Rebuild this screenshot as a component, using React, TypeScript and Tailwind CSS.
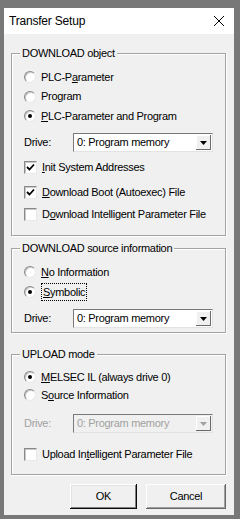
import React from "react";

const font = { fontFamily: '"Liberation Sans", Arial, sans-serif' };

function Radio({ checked }: { checked?: boolean }) {
  return (
    <span className="relative flex h-[12px] w-[12px] shrink-0 items-center justify-center rounded-full border border-t-[#8a8a8a] border-l-[#8a8a8a] border-r-[#e8e8e8] border-b-[#e8e8e8] bg-white shadow-[inset_1px_1px_0_#c8c8c8]">
      {checked && <span className="h-[4px] w-[4px] rounded-full bg-black" />}
    </span>
  );
}

function Check({ checked }: { checked?: boolean }) {
  return (
    <span className="flex h-[13px] w-[13px] shrink-0 items-center justify-center border border-t-[#8a8a8a] border-l-[#8a8a8a] border-r-[#e8e8e8] border-b-[#e8e8e8] bg-white shadow-[inset_1px_1px_0_#c8c8c8]">
      {checked && (
        <svg width="9" height="9" viewBox="0 0 9 9">
          <path d="M1 4 L3.5 6.5 L8 1.5" fill="none" stroke="#000" strokeWidth="1.8" />
        </svg>
      )}
    </span>
  );
}

function Row({
  children,
  h = "h-[20px]",
  extra = "",
}: {
  children: React.ReactNode;
  h?: string;
  extra?: string;
}) {
  return <div className={`flex items-center gap-[5px] pl-[12px] ${h} ${extra}`}>{children}</div>;
}

function Select({ disabled, extra = "" }: { disabled?: boolean; extra?: string }) {
  return (
    <div className={`flex h-[19px] items-center pl-[12px] pr-[12px] ${extra}`}>
      <span className={`w-[49px] ${disabled ? "text-[#a0a0a0]" : "text-black"}`}>Drive:</span>
      <div
        className={`flex h-full flex-1 items-center border border-t-[#7a7a7a] border-l-[#7a7a7a] border-r-[#e3e3e3] border-b-[#e3e3e3] ${
          disabled ? "bg-[#f0f0f0]" : "bg-white"
        }`}
      >
        <span className={`flex-1 pl-[3px] ${disabled ? "text-[#a0a0a0]" : "text-black"}`}>
          0: Program memory
        </span>
        <span className="mr-[1px] flex h-[15px] w-[15px] items-center justify-center bg-[#f0f0f0] shadow-[inset_-1px_-1px_0_#6a6a6a,inset_1px_1px_0_#fff]">
          <svg width="7" height="4" viewBox="0 0 7 4">
            <path d="M0 0 H7 L3.5 4 Z" fill={disabled ? "#a0a0a0" : "#000"} />
          </svg>
        </span>
      </div>
    </div>
  );
}

function Group({
  label,
  children,
  extra = "",
}: {
  label: string;
  children: React.ReactNode;
  extra?: string;
}) {
  return (
    <div
      className={`relative border border-[#a3a3a3] shadow-[1px_1px_0_#fff,inset_1px_1px_0_#fff] ${extra}`}
    >
      <span className="absolute -top-[8px] left-[8px] bg-[#f0f0f0] px-[2px] leading-[14px]">
        {label}
      </span>
      {children}
    </div>
  );
}

export default function App() {
  return (
    <div
      className="flex h-[519px] w-[240px] flex-col bg-[#787878] pb-[4px] pl-[4px] pr-[6px] pt-[8px] text-[11px] tracking-[-0.3px] text-black"
      style={font}
    >
      <div className="flex flex-1 flex-col bg-[#f0f0f0]">
        <div className="flex h-[26px] items-center justify-between bg-white pl-[5px] pr-[10px]">
          <span className="text-[12px] tracking-[-0.2px]">Transfer Setup</span>
          <svg width="10" height="10" viewBox="0 0 10 10">
            <path d="M0 0 L10 10 M10 0 L0 10" stroke="#000" strokeWidth="1" />
          </svg>
        </div>

        <div className="flex flex-col pl-[7px] pr-[8px] pt-[19px]">
          <Group label="DOWNLOAD object" extra="pt-[13px] pb-[11px]">
            <Row>
              <Radio />
              <span>
                PLC-P<u>a</u>rameter
              </span>
            </Row>
            <Row h="h-[19px]">
              <Radio />
              <span>Program</span>
            </Row>
            <Row>
              <Radio checked />
              <span>
                <u>P</u>LC-Parameter and Program
              </span>
            </Row>
            <Select extra="mt-[7px]" />
            <Row extra="mt-[5px]">
              <Check checked />
              <span>
                <u>I</u>nit System Addresses
              </span>
            </Row>
            <Row extra="mt-[5px]">
              <Check checked />
              <span>
                <u>D</u>ownload Boot (Autoexec) File
              </span>
            </Row>
            <Row extra="mt-[2px]">
              <Check />
              <span>
                D<u>o</u>wnload Intelligent Parameter File
              </span>
            </Row>
          </Group>

          <Group label="DOWNLOAD source information" extra="mt-[12px] pt-[13px] pb-[4px]">
            <Row>
              <Radio />
              <span>
                <u>N</u>o Information
              </span>
            </Row>
            <Row>
              <Radio checked />
              <span className="border border-dotted border-black px-[1px]">
                <u>S</u>ymbolic
              </span>
            </Row>
            <Select extra="mt-[7px]" />
          </Group>

          <Group label="UPLOAD mode" extra="mt-[21px] pt-[13px] pb-[10px]">
            <Row h="h-[18px]">
              <Radio checked />
              <span>
                <u>M</u>ELSEC IL (always drive 0)
              </span>
            </Row>
            <Row h="h-[18px]">
              <Radio />
              <span>
                S<u>o</u>urce Information
              </span>
            </Row>
            <Select disabled extra="mt-[10px]" />
            <Row extra="mt-[11px]">
              <Check />
              <span>
                Upload In<u>t</u>elligent Parameter File
              </span>
            </Row>
          </Group>

          <div className="mt-[9px] flex justify-end gap-[9px]">
            <button className="flex h-[25px] w-[67px] items-center justify-center bg-[#f0f0f0] shadow-[inset_-1px_-1px_0_#0a0a0a,inset_1px_1px_0_#fff,inset_-2px_-2px_0_#808080,inset_2px_2px_0_#e3e3e3]">
              OK
            </button>
            <button className="flex h-[25px] w-[80px] items-center justify-center bg-[#f0f0f0] shadow-[inset_-1px_-1px_0_#696969,inset_1px_1px_0_#fff,inset_-2px_-2px_0_#a0a0a0]">
              Cancel
            </button>
          </div>
        </div>
      </div>
    </div>
  );
}
